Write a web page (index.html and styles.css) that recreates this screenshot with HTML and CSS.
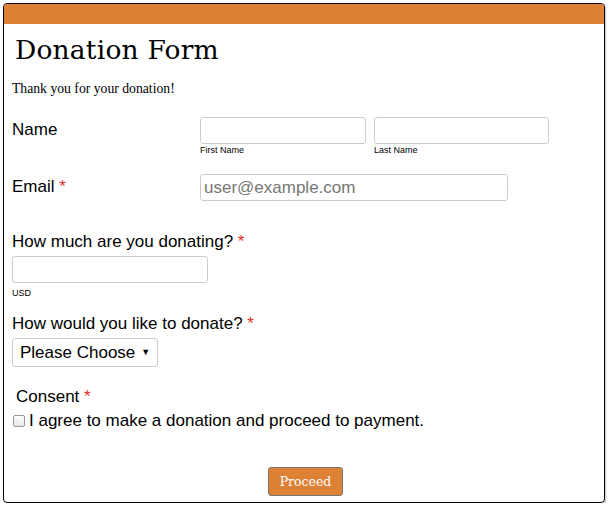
FILE: index.html
```html
<!DOCTYPE html>
<html>
<head>
<meta charset="utf-8">
<link rel="stylesheet" href="styles.css">
</head>
<body>
<div class="card">
  <div class="topbar"></div>
  <div class="content">
    <h1 class="title">Donation Form</h1>
    <p class="intro">Thank you for your donation!</p>

    <div class="row name-row">
      <div class="label">Name</div>
      <div class="name-fields">
        <div class="sub">
          <input class="text name-input" type="text">
          <span class="sublabel">First Name</span>
        </div>
        <div class="sub">
          <input class="text name-input" type="text">
          <span class="sublabel">Last Name</span>
        </div>
      </div>
    </div>

    <div class="row email-row">
      <div class="label">Email <span class="req">*</span></div>
      <input class="text email-input" type="text" placeholder="user@example.com">
    </div>

    <div class="block amount">
      <div class="label">How much are you donating? <span class="req">*</span></div>
      <input class="text amount-input" type="text">
      <span class="sublabel">USD</span>
    </div>

    <div class="block method">
      <div class="label">How would you like to donate? <span class="req">*</span></div>
      <div class="select">Please Choose <span class="caret">&#9660;</span></div>
    </div>

    <div class="block consent">
      <div class="label consent-label">Consent <span class="req">*</span></div>
      <label class="check-row"><span class="checkbox"></span>I agree to make a donation and proceed to payment.</label>
    </div>

    <div class="actions">
      <button class="btn" type="button">Proceed</button>
    </div>
  </div>
</div>
</body>
</html>
```
FILE: styles.css
```css
* { box-sizing: border-box; }
html, body { margin: 0; padding: 0; background: #fff; }
body { padding: 3px 4px 0 3px; font-family: "Liberation Sans", Arial, sans-serif; color: #000; }

.card {
  border: 1px solid #000;
  border-radius: 4px;
  overflow: hidden;
  box-shadow: 1px 1px 2px rgba(0,0,0,0.25);
  height: 500px;
}
.topbar { height: 20px; background: #dd8134; }

.content { padding: 0 8px; }

.title {
  font-family: "DejaVu Serif", "Liberation Serif", serif;
  font-weight: normal;
  font-size: 26.5px;
  margin: 9px 0 0 3px;
  line-height: 34px;
  letter-spacing: 0.2px;
}
.intro {
  font-family: "Liberation Serif", serif;
  font-size: 13.7px;
  margin: 14px 0 0 0;
  line-height: 16px;
}

.label { font-size: 17px; line-height: 20px; }
.req { color: #e8302a; }

.row { display: grid; grid-template-columns: 188px 1fr; }
.name-row { margin-top: 20px; }
.name-row .label { padding-top: 3px; }
.name-fields { display: flex; gap: 8px; }
.sub { display: flex; flex-direction: column; }

.text {
  display: block;
  border: 1px solid #ccc;
  border-radius: 3px;
  height: 27px;
  padding: 0 3px;
  font-family: "Liberation Sans", Arial, sans-serif;
  font-size: 17px;
  background: #fff;
  margin: 0;
}
.text::placeholder { color: #777; }
.name-input { width: 166px; }
.name-fields .sub:nth-child(2) .name-input { width: 175px; }
.sublabel { font-size: 9px; line-height: 11px; margin-top: 1px; }

.email-row { margin-top: 18px; align-items: start; }
.email-row .label { padding-top: 3px; }
.email-input { width: 308px; }

.block { display: flex; flex-direction: column; align-items: flex-start; }
.amount { margin-top: 31px; }
.amount .label { margin-bottom: 4px; }
.amount-input { width: 196px; }
.amount .sublabel { margin-top: 5px; }

.method { margin-top: 15px; }
.method .label { margin-bottom: 4px; }
.select {
  width: 146px;
  height: 29px;
  border: 1px solid #ccc;
  border-radius: 3px;
  font-size: 17px;
  line-height: 27px;
  padding-left: 7px;
  display: flex;
  align-items: center;
}
.caret { font-size: 9px; margin-left: 6px; }

.consent { margin-top: 20px; }
.consent-label { padding-left: 4px; }
.check-row { display: flex; align-items: center; font-size: 17px; line-height: 20px; margin-top: 4px; }
.checkbox {
  width: 12px; height: 12px;
  border: 1px solid #999;
  border-radius: 2px;
  background: linear-gradient(#fdfdfd, #e8e8e8);
  margin: 0 4px 0 1px;
}

.actions { display: flex; justify-content: center; margin-top: 36px; }
.btn {
  width: 75px;
  height: 29px;
  background: #dd8134;
  color: #fff;
  border: 1px solid #777;
  border-radius: 3px;
  font-family: "DejaVu Serif", "Liberation Serif", serif;
  font-size: 12.5px;
  padding: 0;
  margin-left: 3px;
}
```
